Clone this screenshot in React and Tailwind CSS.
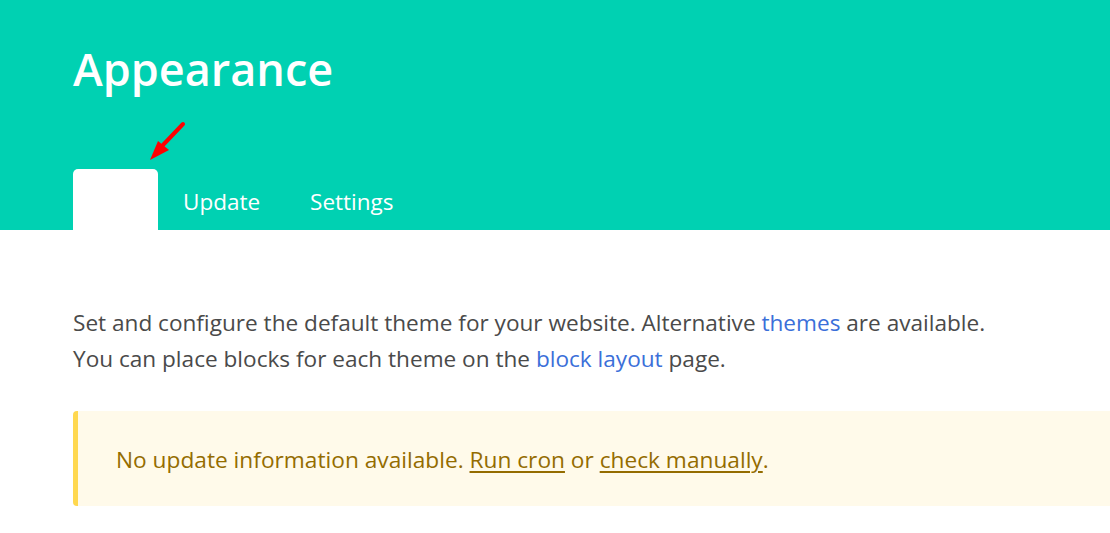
import React from "react";

export default function App() {
  return (
    <div className="w-[1110px] h-[533px] overflow-hidden bg-white" style={{ fontFamily: '"Open Sans", "Noto Sans", sans-serif' }}>
      <header className="relative bg-[#00d1b2] h-[230px] flex flex-col justify-between pl-[73px]">
        <h1 className="pt-[39px] text-[45px] leading-[60px] font-semibold text-white">Appearance</h1>
        <nav className="flex items-end">
          <div className="w-[85px] h-[61px] bg-white rounded-t-[5px]"></div>
          <a className="h-[56px] flex items-center px-[25px] text-[22.5px] text-white">Update</a>
          <a className="h-[56px] flex items-center px-[25px] text-[22.5px] text-white">Settings</a>
        </nav>
        <svg className="absolute left-[145px] top-[118px]" width="44" height="46" viewBox="0 0 44 46">
          <line x1="38" y1="6" x2="18" y2="27" stroke="#ff0000" strokeWidth="4" strokeLinecap="round" />
          <polygon points="5,42 13,23 24,32" fill="#ff0000" />
        </svg>
      </header>
      <main className="pl-[73px] pt-[75px]">
        <p className="text-[22.6px] leading-[36px] text-[#4a4a4a]">
          Set and configure the default theme for your website. Alternative <a className="text-[#3b6fd9]">themes</a> are available.
          <br />
          You can place blocks for each theme on the <a className="text-[#3b6fd9]">block layout</a> page.
        </p>
        <div className="mt-[34px] h-[95px] flex items-center pl-[38px] pt-[4px] bg-[#fffaea] border-l-[5px] border-[#ffd84f] rounded-l-[4px] text-[22.7px] text-[#946c00]">
          <span>
            No update information available. <a className="underline decoration-2 underline-offset-[3px]">Run cron</a> or <a className="underline decoration-2 underline-offset-[3px]">check manually</a>.
          </span>
        </div>
      </main>
    </div>
  );
}
